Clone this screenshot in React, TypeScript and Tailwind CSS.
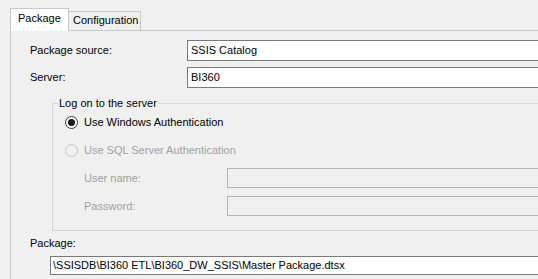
import React from "react";

function Radio({ checked, disabled }: { checked?: boolean; disabled?: boolean }) {
  return (
    <div
      className={
        "w-[13px] h-[13px] rounded-full border flex items-center justify-center shrink-0 " +
        (disabled ? "border-[#c4c4c4] bg-[#f0f0f0]" : "border-[#333333] bg-white")
      }
    >
      {checked && <div className="w-[7px] h-[7px] rounded-full bg-[#1a1a1a]" />}
    </div>
  );
}

export default function App() {
  return (
    <div
      className="w-[538px] h-[279px] bg-[#f0f0f0] overflow-hidden text-[11px] leading-[13px] text-black"
      style={{ fontFamily: '"Liberation Sans", Arial, sans-serif' }}
    >
      <div className="pt-[8px] pl-[10px]">
        {/* tabs */}
        <div className="flex items-end h-[22px]">
          <div className="relative z-10 w-[59px] h-[23px] -mb-px bg-white border border-b-0 border-[#c8c8c8] pl-[7px] pt-[3px]">
            Package
          </div>
          <div className="w-[72px] h-[19px] bg-[#f0f0f0] border border-l-0 border-b-0 border-[#c8c8c8] pl-[4px] pt-[2px]">
            Configuration
          </div>
        </div>
        {/* panel */}
        <div className="w-[600px] h-[260px] border-l border-t border-[#c8c8c8] bg-[#f0f0f0]">
          {/* rows */}
          <div className="ml-[19px] mt-[9px] flex items-center h-[21px]">
            <div className="w-[157px]">Package source:</div>
            <div className="flex-1 h-[21px] bg-white border border-[#7a7a7a] pl-[3px] flex items-center">
              SSIS Catalog
            </div>
          </div>
          <div className="ml-[19px] mt-[6px] flex items-center h-[21px]">
            <div className="w-[157px]">Server:</div>
            <div className="flex-1 h-[21px] bg-white border border-[#7a7a7a] pl-[3px] flex items-center">
              BI360
            </div>
          </div>
          {/* group box */}
          <div className="relative ml-[41px] mt-[15px] border border-r-0 border-[#d5d5d5] pb-[14px]">
            <div className="absolute -top-[7px] left-[5px] bg-[#f0f0f0] px-[1px]">Log on to the server</div>
            <div className="flex items-center gap-[6px] pl-[12px] mt-[12px] h-[13px]">
              <Radio checked />
              <span>Use Windows Authentication</span>
            </div>
            <div className="flex items-center gap-[6px] pl-[12px] mt-[15px] h-[13px] text-[#a0a0a0]">
              <Radio disabled />
              <span>Use SQL Server Authentication</span>
            </div>
            <div className="flex items-center pl-[31px] mt-[11px] h-[20px] text-[#a0a0a0]">
              <div className="w-[143px]">User name:</div>
              <div className="flex-1 h-[20px] border border-[#b4b4b4] bg-[#f0f0f0]" />
            </div>
            <div className="flex items-center pl-[31px] mt-[8px] h-[20px] text-[#a0a0a0]">
              <div className="w-[143px]">Password:</div>
              <div className="flex-1 h-[20px] border border-[#b4b4b4] bg-[#f0f0f0]" />
            </div>
          </div>
          <div className="ml-[19px] mt-[6px] h-[13px]">Package:</div>
          <div className="ml-[39px] mt-[6px] h-[19px] bg-white border border-[#7a7a7a] pl-[2px] flex items-center">
            \SSISDB\BI360 ETL\BI360_DW_SSIS\Master Package.dtsx
          </div>
        </div>
      </div>
    </div>
  );
}
